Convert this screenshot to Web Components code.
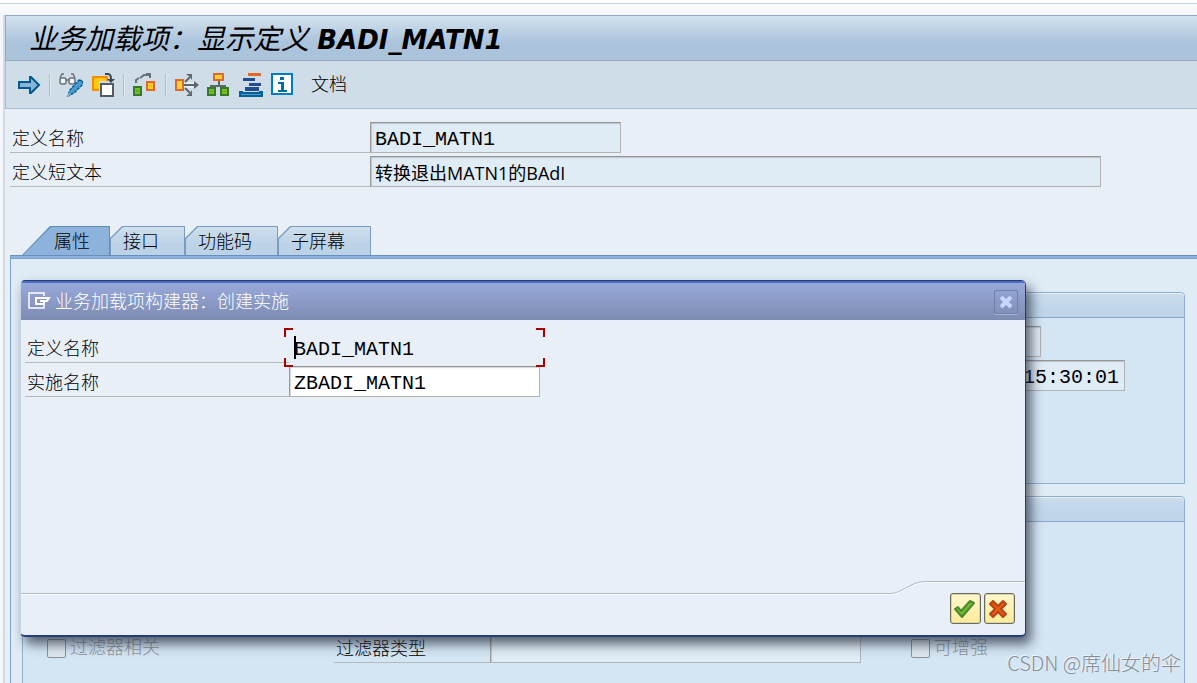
<!DOCTYPE html>
<html lang="zh-CN">
<head>
<meta charset="utf-8">
<title>业务加载项：显示定义 BADI_MATN1</title>
<style>
html, body { margin: 0; height: 100%; }
body {
  overflow: hidden;
  font-family: "Liberation Sans", "Noto Sans CJK SC", sans-serif;
  font-size: 18px;
  line-height: 24px;
  color: #000;
  background: #f6f8fb;
}
</style>
</head>
<body>
<sap-app></sap-app>
<script>
const define = (name, html, setup) => {
  const tpl = document.createElement('template');
  tpl.innerHTML = html;
  customElements.define(name, class extends HTMLElement {
    constructor() {
      super();
      this.attachShadow({ mode: 'open' }).append(tpl.content.cloneNode(true));
    }
    connectedCallback() {
      if (setup && !this.ready) { this.ready = true; setup(this, this.shadowRoot); }
    }
  });
};

/* Icon set, 24 x 24 grid */
const ICONS = {
  go: '<path d="M2 9h11V4h1l8 8-8 8h-1v-5H2z" fill="#8ab1d8" stroke="#005a8c" stroke-width="2"/>',
  glasses: '<g fill="none" stroke="#6b7178" stroke-width="1.5"><rect x="1" y="5" width="6" height="6" rx="2" fill="#f4f7fa"/><rect x="10" y="5" width="6" height="6" rx="2" fill="#f4f7fa"/><path d="M7 7h3M1 5l2-4h2M16 5l-2-4h-2"/></g><path d="M20 7l4 1-1 4-8 8-6 3 2-6z" fill="#4e9cce" stroke="#006299" stroke-width="1.5" stroke-dasharray="3 1"/><path d="M11 20l-3 4" stroke="#8cabc4" stroke-width="2"/>',
  copy: '<path d="M2 4h14v13H2z" fill="#ffc814" stroke="#f78e00" stroke-width="2"/><path d="M8 8h14v16H8z" fill="#d0dde7"/><path d="M10 11h12v12H10z" fill="#fff" stroke="#565b61" stroke-width="2"/><path d="M14 1h3q3 0 3 5" fill="none" stroke="#40464b" stroke-width="2"/><path d="M16 6h8l-4 4z" fill="#40464b"/>',
  route: '<path d="M1 14h7v8H1z" fill="#7fba28" stroke="#357a28" stroke-width="2"/><path d="M14 9h7v8h-7z" fill="#ffd42e" stroke="#e2672b" stroke-width="2"/><path d="M3 10V7l3-2M7 5l4-3h5M17 5V1l-4 0" fill="none" stroke="#6b7178" stroke-width="2"/><path d="M3 17h3v2H3z" fill="#5ca91f"/><path d="M16 12h3v2h-3z" fill="#ffb819"/>',
  spread: '<path d="M1 7h7v10H1z" fill="#ffd42e" stroke="#e2672b" stroke-width="2"/><path d="M9 10h10M9 14h9" stroke="#fff"/><path d="M9 12h12M10 9l5-5M10 15l5 5" stroke="#5f666c" stroke-width="2"/><path d="M19 8l5 4-5 4zM11 1h6v6l-2-3zM11 23h6v-6l-2 3z" fill="#5f666c"/>',
  tree: '<path d="M12 8v5M4 16v-3h14v3" fill="none" stroke="#5f666c" stroke-width="2"/><path d="M7 1h9v6H7z" fill="#ffd42e" stroke="#e2672b" stroke-width="2"/><path d="M1 15h7v7H1zM14 15h7v7h-7z" fill="#7fba28" stroke="#357a28" stroke-width="2"/><path d="M3 18h3v1H3zM16 18h3v1h-3z" fill="#5ca91f"/>',
  stack: '<path d="M9 0h13v3H9z" fill="#e2672b"/><path d="M4 5h12v3H4zM10 10h12v3H10zM6 14h14v4H6z" fill="#244c91"/><path d="M1 19v4h22v-4h-2v1H3v-1z" fill="#4e9cce" stroke="#006299" stroke-width="2"/>',
  info: '<path d="M1 1h20v20H1z" fill="#fff" stroke="#007cc0" stroke-width="2"/><path d="M9 4h4v3H9zM7 9h6v8h3v2H7v-2h3v-6H7z" fill="#006da8"/>',
  exit: '<path d="M16 6V3H1v15h15v-3" fill="none" stroke="#fff" stroke-width="1.5"/><path d="M8 8h13l-2 3h-7M8 7v7h8v-3" fill="none" stroke="#fff" stroke-width="2"/>',
  close: '<path d="M7 7l10 10M17 7L7 17" stroke="#c6d8ff" stroke-width="4"/>',
  ok: '<path d="M2 12l3-2 3 4 9-10 4 2-12 14z" fill="#76b82a" stroke="#4a8a35" stroke-width="2" stroke-linejoin="round"/>',
  cancel: '<path d="M6 4l5 5 5-5 3 3-5 5 5 5-3 3-5-5-5 5-3-3 5-5-5-5z" fill="#e25a14" stroke="#b94214" stroke-width="2" stroke-linejoin="round"/>'
};

define('sap-icon', `
<style>:host { display: block; width: 24px; height: 24px; flex: none; } svg { display: block; }</style>
<svg width="24" height="24" viewBox="0 0 24 24" aria-hidden="true"></svg>`,
(el, root) => { root.querySelector('svg').innerHTML = ICONS[el.getAttribute('name')]; });

define('sap-titlebar', `
<style>
:host { display: block; border: 1px solid #93a9c0; border-right: 0; background: linear-gradient(#d3e2ee, #abc4dc 60%, #abc4dc); }
h1 { height: 44px; margin: 0; padding: 0 23px; font: italic 400 28px/42px "Noto Sans CJK SC", sans-serif; white-space: nowrap; }
::slotted(b) { margin-left: 2px; font: italic 700 26px/40px "DejaVu Sans", sans-serif; }
</style>
<h1><slot></slot></h1>`);

define('sap-tool', `
<style>
:host { display: block; }
button { display: flex; margin: 0; padding: 0; border: 0; background: none; font: inherit; font-weight: 300; color: inherit; cursor: pointer; }
</style>
<button type="button"><slot></slot></button>`,
(el, root) => {
  const name = el.getAttribute('icon');
  const button = root.querySelector('button');
  if (name) {
    const icon = document.createElement('sap-icon');
    icon.setAttribute('name', name);
    button.replaceChildren(icon);
    button.setAttribute('aria-label', el.getAttribute('label'));
  }
});

define('sap-toolbar', `
<style>
:host { display: flex; align-items: center; gap: 8px; padding: 0 11px; height: 47px; border: 1px solid #a9bdd1; border-top: 0; border-right: 0; background: #cfdde8; }
::slotted(i) { width: 1px; height: 22px; background: #a5bfda; border-right: 1px solid #dde8f2; }
::slotted(.text) { margin-left: 8px; }
</style>
<slot></slot>`);

define('sap-field', `
<style>
:host { display: flex; height: 31px; }
label { box-sizing: border-box; width: var(--label, 360px); flex: none; padding: 5px 2px 0; border-bottom: 1px solid #b4b9be; font-weight: 300; }
label:empty { display: none; }
input { box-sizing: border-box; width: var(--field, 251px); min-width: 0; height: 31px; margin: 0; padding: 3px 4px 0; border: 1px solid #b2b2b2; border-top-color: #949494; border-left-color: #9c9c9c; border-radius: 0; outline: 0;
  background: var(--fill, #dfebf5); box-shadow: inset 1px 1px 1px rgba(120, 130, 140, .35); color: #000; font: 20px/26px "Liberation Mono", monospace; }
:host([text]) input { padding-top: 0; font: 18px/28px "Open Sans", "Noto Sans CJK SC", sans-serif; }
:host([wide]) input { flex: 1; }
:host([flat]) input { border-color: transparent; background: transparent; box-shadow: none; }
</style>
<label for="f"></label><input id="f">`,
(el, root) => {
  const input = root.querySelector('input');
  root.querySelector('label').textContent = el.getAttribute('label') || '';
  input.value = el.getAttribute('value') || '';
  input.readOnly = el.hasAttribute('locked');
  if (!el.getAttribute('label')) input.setAttribute('aria-label', el.getAttribute('name'));
});

define('sap-check', `
<style>
:host { display: block; }
label { display: flex; align-items: center; gap: 4px; color: #8f969d; font-weight: 300; }
input { appearance: none; box-sizing: border-box; width: 19px; height: 19px; margin: 0; border: 1px solid #8f8f8f; border-radius: 2px; background: #dde6ee; }
</style>
<label><input type="checkbox" disabled><slot></slot></label>`);

define('sap-tabs', `
<style>
:host { display: flex; padding-left: 11px; height: 29px; }
button { position: relative; flex: none; width: var(--w); margin: 0; padding: 2px 0 0 13px; border: 0; background: none; color: #000; font: inherit; font-weight: 300; text-align: left; }
button.on { padding-left: 32px; }
.shape { position: absolute; inset: 0; background: #7b9cbf; clip-path: polygon(0 12px, 12px 0, 100% 0, 100% 100%, 0 100%); }
.shape::after { content: ""; position: absolute; inset: 1px 1px 0; background: linear-gradient(#cfdfed, #bcd3e7 60%); clip-path: polygon(0 12px, 12px 0, 100% 0, 100% 100%, 0 100%); }
.on .shape { background: #5f8db8; clip-path: polygon(0 100%, 28px 0, 100% 0, 100% 100%); }
.on .shape::after { background: #8db2db; clip-path: polygon(0 100%, 28px 0, 100% 0, 100% 100%); }
span { position: relative; }
</style>`,
(el, root) => {
  const widths = [88, 75, 93, 93];
  el.getAttribute('items').split(',').forEach((name, i) => {
    const button = document.createElement('button');
    const shape = document.createElement('div');
    const text = document.createElement('span');
    button.type = 'button';
    button.style.setProperty('--w', widths[i] + 'px');
    if (i === 0) button.className = 'on';
    shape.className = 'shape';
    text.textContent = name;
    button.append(shape, text);
    root.append(button);
  });
});

define('sap-group', `
<style>
:host { display: block; border: 1px solid #90b0d0; border-radius: 4px 4px 0 0; background: #d4e5f3; }
header { height: 24px; border-bottom: 1px solid #88a4c8; border-radius: 4px 4px 0 0; box-shadow: inset 0 1px #e4eef7; background: linear-gradient(#cbddee, #bfd6ea 60%); }
</style>
<header></header><slot></slot>`);

define('sap-dialog', `
<style>
:host { box-sizing: border-box; display: flex; flex-direction: column; border: 1px solid #263e76; border-left-color: #c5d2e4; border-bottom: 2px solid #263e76; border-radius: 5px; background: #e8eff7; box-shadow: 5px 7px 12px rgba(40, 50, 65, .75); overflow: hidden; }
header { display: flex; align-items: center; gap: 3px; height: 37px; padding: 0 7px; border-top: 2px solid #4c6cc0; background: linear-gradient(#98a8da, #7d8cb2); color: #fff; }
h2 { flex: 1; margin: 0; font-size: 18px; font-weight: 300; line-height: 24px; }
header button { padding: 0; width: 24px; height: 24px; border: 1px solid #7080ac; border-radius: 2px; box-shadow: 0 1px #a5b4dc; background: none; }
header button sap-icon { margin: -1px; }
main { flex: 1; padding: 12px 4px; }
footer { position: relative; display: flex; justify-content: flex-end; gap: 3px; height: 42px; padding: 12px 10px 0; }
footer svg { position: absolute; right: 0; top: 0; }
footer::before { content: ""; position: absolute; left: 0; right: 136px; top: 12px; height: 1px; background: #adb9cf; border-bottom: 1px solid #fff; }
footer button { position: relative; width: 31px; height: 31px; padding: 2px; border: 1px solid #6b6a5c; border-radius: 3px; box-shadow: inset 0 0 0 1px #d9d3a8; background: linear-gradient(#fff8cf, #ffeb98); }
</style>
<header><sap-icon name="exit"></sap-icon><h2><slot name="title"></slot></h2><button type="button" aria-label="关闭"><sap-icon name="close"></sap-icon></button></header>
<main><slot></slot></main>
<footer>
<svg width="136" height="15" viewBox="0 0 136 15" fill="none" aria-hidden="true"><path d="M0 13.500h2c10 0 20-12 34-12h100" stroke="#fff"/><path d="M0 12.500h2c10 0 20-12 34-12h100" stroke="#adb9cf"/></svg>
<button type="button" aria-label="确定"><sap-icon name="ok"></sap-icon></button>
<button type="button" aria-label="取消"><sap-icon name="cancel"></sap-icon></button>
</footer>`);

define('sap-focus', `
<style>
:host { display: block; position: absolute; }
i { position: absolute; width: 7px; height: 7px; border: 0 solid #a80000; }
.a { left: 0; top: 0; border-width: 2px 0 0 2px; } .b { right: 0; top: 0; border-width: 2px 2px 0 0; }
.c { left: 0; bottom: 0; border-width: 0 0 2px 2px; } .d { right: 0; bottom: 0; border-width: 0 2px 2px 0; }
.caret { left: 10px; top: 8px; width: 2px; height: 23px; background: #000; }
</style>
<i class="a"></i><i class="b"></i><i class="c"></i><i class="d"></i><i class="caret"></i>`);

define('sap-app', `
<style>
:host { display: block; position: relative; height: 100vh; overflow: hidden; background: linear-gradient(#fff, #f3f6fb 14px); }
.top { height: 11px; margin-top: 3px; border-top: 1px solid #c6d2de; }
.window { min-height: 100vh; margin-left: 3px; border-left: 2px solid #d4dae5; background: #e8eff7; }
.form { display: grid; gap: 3px; padding: 13px 96px 0 5px; }
sap-tabs { margin: 39px 0 0 6px; }
.panel { margin-left: 5px; min-height: 500px; padding: 36px 12px 0 11px; border-left: 1px solid #78a2ca; border-top: 1px solid #6690bb; box-shadow: inset 0 2px #8db2db, inset 0 3px #78a0c8; background: #dfebf5; }
.panel sap-group:first-child { height: 190px; margin-bottom: 12px; }
.panel sap-group:last-child { height: 260px; }
.side { display: grid; justify-items: end; gap: 3px; padding-top: 8px; }
.side sap-field:first-child { margin-right: 143px; }
.side sap-field:last-child { margin-right: 59px; }
.filter { display: flex; padding: 110px 0 0 24px; }
.filter sap-check { width: 287px; padding-top: 4px; }
.filter sap-field { width: 527px; margin-right: 50px; }
.filter sap-check:last-child { width: auto; }
sap-dialog { position: absolute; left: 20px; right: 171px; top: 280px; height: 357px; }
.rows { display: grid; gap: 3px; }
.mark { position: absolute; right: 16px; bottom: 7px; font: 300 20px/26px "Noto Sans CJK SC", sans-serif; color: #858d96; text-shadow: -1px -1px #eef3f8; white-space: nowrap; }
.focus { position: relative; }
sap-focus { left: 259px; top: -4px; width: 261px; height: 39px; }
</style>
<div class="top"></div>
<div class="window">
  <sap-titlebar>业务加载项：显示定义 <b>BADI_MATN1</b></sap-titlebar>
  <sap-toolbar>
    <sap-tool icon="go" label="继续"></sap-tool><i></i>
    <sap-tool icon="glasses" label="显示/更改"></sap-tool>
    <sap-tool icon="copy" label="其他对象"></sap-tool><i></i>
    <sap-tool icon="route" label="激活"></sap-tool><i></i>
    <sap-tool icon="spread" label="使用位置"></sap-tool>
    <sap-tool icon="tree" label="层次"></sap-tool>
    <sap-tool icon="stack" label="堆栈"></sap-tool>
    <sap-tool icon="info" label="信息"></sap-tool>
    <sap-tool class="text">文档</sap-tool>
  </sap-toolbar>
  <div class="form">
    <sap-field label="定义名称" value="BADI_MATN1" locked></sap-field>
    <sap-field label="定义短文本" value="转换退出MATN1的BAdI" text wide locked></sap-field>
  </div>
  <sap-tabs items="属性,接口,功能码,子屏幕"></sap-tabs>
  <div class="panel">
    <sap-group>
      <div class="side">
        <sap-field name="日期" style="--field:120px" locked></sap-field>
        <sap-field name="时间" value="15:30:01" style="--field:107px" locked></sap-field>
      </div>
    </sap-group>
    <sap-group>
      <div class="filter">
        <sap-check>过滤器相关</sap-check>
        <sap-field label="过滤器类型" style="--label:156px" wide locked></sap-field>
        <sap-check>可增强</sap-check>
      </div>
    </sap-group>
  </div>
</div>
<sap-dialog>
  <span slot="title">业务加载项构建器：创建实施</span>
  <div class="rows">
    <div class="focus">
      <sap-field label="定义名称" value="BADI_MATN1" style="--label:264px" flat locked></sap-field>
      <sap-focus></sap-focus>
    </div>
    <sap-field label="实施名称" value="ZBADI_MATN1" style="--label:264px;--fill:#fff"></sap-field>
  </div>
</sap-dialog>
<div class="mark">CSDN @席仙女的伞</div>`);
</script>
</body>
</html>
